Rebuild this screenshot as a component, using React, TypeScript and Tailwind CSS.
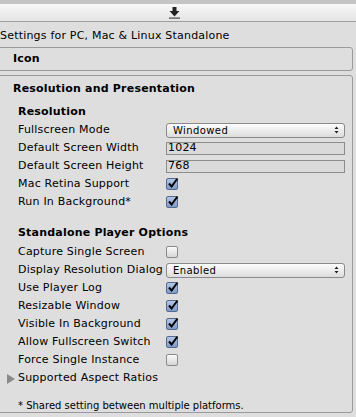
import React from 'react';

const font = { fontFamily: '"DejaVu Sans", "Liberation Sans", sans-serif' };

function Check({ on }: { on: boolean }) {
  return (
    <div
      className={
        'w-[12px] h-[12px] rounded-[2px] border relative ' +
        (on
          ? 'border-[#56698a] bg-gradient-to-b from-[#b4c6e6] to-[#7d99c9]'
          : 'border-[#8a8a8a] bg-gradient-to-b from-[#fbfbfb] to-[#d6d6d6]')
      }
    >
      {on && (
        <svg className="absolute left-[0px] top-[-2px]" width="12" height="12" viewBox="0 0 12 12">
          <path d="M2 6.5 L4.6 9.5 L10.5 1.5" fill="none" stroke="#000" strokeWidth="2" />
        </svg>
      )}
    </div>
  );
}

function Dropdown({ value }: { value: string }) {
  return (
    <div className="flex-1 h-[15px] rounded-[3px] border border-[#8a8a8a] bg-gradient-to-b from-[#fdfdfd] to-[#dcdcdc] flex items-center justify-between pl-[6px] pr-[5px]">
      <span className="text-[10px] tracking-[0.4px]">{value}</span>
      <svg width="5" height="8" viewBox="0 0 5 8">
        <path d="M0.5 3 L2.5 0.5 L4.5 3 Z M0.5 5 L2.5 7.5 L4.5 5 Z" fill="#222" />
      </svg>
    </div>
  );
}

function TextField({ value }: { value: string }) {
  return (
    <div className="flex-1 h-[13px] border border-[#8c8c8c] bg-[#dadada] flex items-center pl-[1px] text-[11px]">
      {value}
    </div>
  );
}

function Row({ label, children }: { label: string; children?: React.ReactNode }) {
  return (
    <div className="h-[18px] flex items-center">
      <div className="w-[165px] pl-[17px] shrink-0 whitespace-nowrap">{label}</div>
      <div className="flex-1 flex items-center pr-[7px]">{children}</div>
    </div>
  );
}

export default function App() {
  return (
    <div className="w-[356px] h-[417px] bg-[#dedede] overflow-hidden text-[11px] text-black tracking-[0.2px]" style={font}>
      <div className="h-[4px] bg-[#c4c4c4]" />
      <div className="h-[18px] bg-gradient-to-b from-[#f8f8f8] to-[#e4e4e4] border-b border-[#9e9e9e] flex justify-center items-center pr-[8px]">
        <svg width="11" height="12" viewBox="0 0 11 12">
          <path d="M3.5 0 H7.5 V4 H10.5 L5.5 9.5 L0.5 4 H3.5 Z" fill="#222" />
          <rect x="0" y="10.5" width="11" height="1.2" fill="#444" />
        </svg>
      </div>

      <div className="h-[25px] pt-[3px] flex items-center">Settings for PC, Mac &amp; Linux Standalone</div>

      <div className="ml-[-4px] mr-[3px] h-[24px] border border-[#9a9a9a] rounded-r-[3px] flex items-center pl-[16px] font-bold">
        Icon
      </div>

      <div className="mt-[4px] ml-[-4px] mr-[3px] h-[338px] border border-[#9a9a9a] rounded-r-[3px] pl-[4px]">
        <div className="h-[23px] pt-[4px] flex items-center pl-[12px] font-bold">Resolution and Presentation</div>
        <div className="h-[22px] pt-[4px] flex items-center pl-[17px] font-bold">Resolution</div>
        <Row label="Fullscreen Mode">
          <Dropdown value="Windowed" />
        </Row>
        <Row label="Default Screen Width">
          <TextField value="1024" />
        </Row>
        <Row label="Default Screen Height">
          <TextField value="768" />
        </Row>
        <Row label="Mac Retina Support">
          <Check on />
        </Row>
        <Row label="Run In Background*">
          <Check on />
        </Row>
        <div className="h-[32px] pt-[13px] flex items-center pl-[17px] font-bold">Standalone Player Options</div>
        <Row label="Capture Single Screen">
          <Check on={false} />
        </Row>
        <Row label="Display Resolution Dialog">
          <Dropdown value="Enabled" />
        </Row>
        <Row label="Use Player Log">
          <Check on />
        </Row>
        <Row label="Resizable Window">
          <Check on />
        </Row>
        <Row label="Visible In Background">
          <Check on />
        </Row>
        <Row label="Allow Fullscreen Switch">
          <Check on />
        </Row>
        <Row label="Force Single Instance">
          <Check on={false} />
        </Row>
        <div className="h-[19px] flex items-center">
          <svg className="ml-[6px] mr-[3px]" width="8" height="10" viewBox="0 0 8 10">
            <path d="M0 0 L8 5 L0 10 Z" fill="#8a8a8a" />
          </svg>
          <span>Supported Aspect Ratios</span>
        </div>
        <div className="h-[26px] pt-[8px] flex items-center pl-[17px] text-[10px] tracking-normal">* Shared setting between multiple platforms.</div>
      </div>
    </div>
  );
}
